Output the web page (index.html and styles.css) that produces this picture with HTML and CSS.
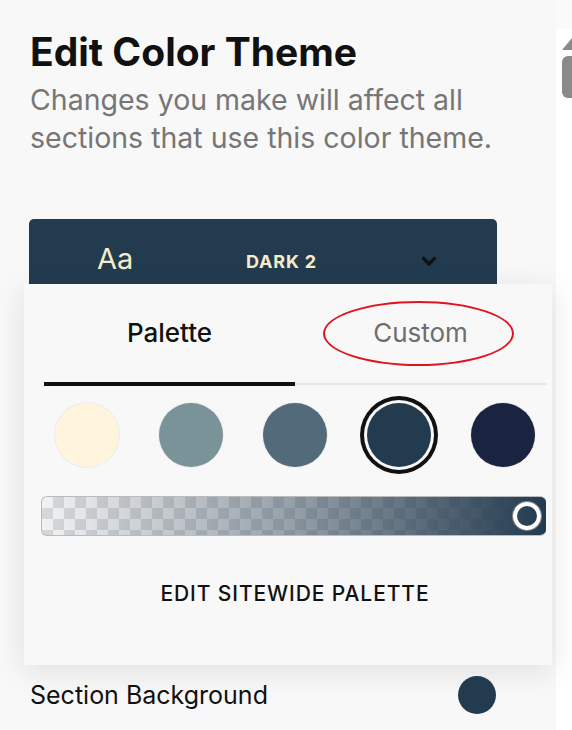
FILE: index.html
```html
<!DOCTYPE html>
<html lang="en">

<head>
    <meta charset="UTF-8">
    <meta name="viewport" content="width=device-width, initial-scale=1.0">
    <title>Edit Color Theme</title>
    <link rel="stylesheet" href="styles.css">
</head>

<body>
    <div class="panel">
        <h1 class="title">Edit Color Theme</h1>
        <p class="subtitle">Changes you make will affect all<br>sections that use this color theme.</p>

        <!-- Theme selector -->
        <div class="theme-bar">
            <span class="theme-sample">Aa</span>
            <span class="theme-name">DARK 2</span>
            <svg class="theme-chevron" width="18" height="11" viewBox="0 0 18 11">
                <path d="M2.5 2.5 L9 9 L15.5 2.5" fill="none" stroke="#111" stroke-width="3.2" />
            </svg>
        </div>

        <!-- Dropdown -->
        <div class="dropdown">
            <div class="tabs">
                <div class="tab active">Palette</div>
                <div class="tab">Custom</div>
            </div>
            <div class="swatches">
                <span class="swatch" style="background:#fff5dc"></span>
                <span class="swatch" style="background:#7a9399"></span>
                <span class="swatch" style="background:#526a7a"></span>
                <span class="swatch selected" style="background:#233b4f"></span>
                <span class="swatch" style="background:#1a2340"></span>
            </div>
            <div class="slider">
                <div class="slider-fill"></div>
                <span class="slider-knob"></span>
            </div>
            <div class="edit-link">EDIT SITEWIDE PALETTE</div>
        </div>

        <div class="row">
            <span>Section Background</span>
            <span class="row-dot"></span>
        </div>
    </div>

    <div class="side">
        <div class="side-box">
            <svg width="10" height="70" viewBox="0 0 10 70">
                <path d="M0 21 L10 9 L10 21 Z" fill="#8a8a8a" />
                <rect x="0" y="27" width="16" height="42" rx="6" fill="#8a8a8a" />
            </svg>
        </div>
    </div>
</body>

</html>
```

FILE: styles.css
```css
body {
    margin: 0;
    font-family: Inter, "Noto Sans", sans-serif;
    background: #fafafa;
    display: flex;
    height: 730px;
    overflow: hidden;
}

.panel {
    position: relative;
    width: 556px;
    flex: none;
    background: #f8f8f8;
    padding: 29px 0 0 30px;
    box-sizing: border-box;
}

.title {
    margin: 0;
    font-size: 39px;
    line-height: 46px;
    font-weight: 700;
    color: #111;
}

.subtitle {
    margin: 6px 0 0;
    font-size: 28.5px;
    line-height: 38px;
    color: #767676;
    white-space: nowrap;
}

/* Theme selector bar */
.theme-bar {
    margin-top: 62px;
    width: 468px;
    height: 80px;
    margin-left: -1px;
    background: #233b4f;
    border-radius: 5px;
    display: flex;
    align-items: flex-start;
    padding-top: 22px;
    box-sizing: border-box;
}

.theme-sample {
    margin-left: 68px;
    width: 149px;
    font-size: 29px;
    color: #f6ecc9;
}

.theme-name {
    margin-top: 10px;
    width: 72px;
    font-size: 18px;
    font-weight: 700;
    letter-spacing: 0.8px;
    color: #f6ecc9;
}

.theme-chevron {
    margin-left: 102px;
    margin-top: 14px;
}

/* Dropdown popover */
.dropdown {
    position: absolute;
    left: 24px;
    top: 284px;
    width: 528px;
    height: 381px;
    background: #f8f8f8;
    box-shadow: 0 6px 30px rgba(0, 0, 0, 0.1);
    padding: 0 6px 0 20px;
    box-sizing: border-box;
}

.tabs {
    display: flex;
    height: 99px;
    border-bottom: 2px solid #e6e6e6;
}

.tab {
    flex: 1;
    text-align: center;
    padding-top: 33px;
    font-size: 26px;
    color: #6e6e6e;
    position: relative;
}

.tab.active {
    color: #111;
    font-weight: 500;
    border-bottom: 4px solid #111;
    margin-bottom: -3px;
}

.tab:last-child::after {
    content: "";
    position: absolute;
    left: 28px;
    top: 17px;
    width: 187px;
    height: 61px;
    border: 2px solid #e0141e;
    border-radius: 50%;
}

.swatches {
    display: flex;
    justify-content: space-between;
    padding: 18px 11px 0 11px;
}

.swatch {
    width: 64px;
    height: 64px;
    border-radius: 50%;
    box-shadow: 0 0 0 1px rgba(0, 0, 0, 0.05);
}

.swatch.selected {
    box-shadow: 0 0 0 3px #f8f8f8, 0 0 0 7px #111;
}

.slider {
    position: relative;
    margin-top: 29px;
    margin-left: -3px;
    height: 38px;
    border-radius: 6px;
    overflow: hidden;
    border: 1px solid #bbb;
    border-right: none;
    background-color: #f2f2f2;
    background-image:
        linear-gradient(45deg, #d6d8da 25%, transparent 25%, transparent 75%, #d6d8da 75%),
        linear-gradient(45deg, #d6d8da 25%, transparent 25%, transparent 75%, #d6d8da 75%);
    background-size: 22px 22px;
    background-position: 0 0, 11px 11px;
}

.slider-fill {
    height: 100%;
    background: linear-gradient(to right, rgba(35, 59, 79, 0) 0%, rgba(35, 59, 79, 0.45) 50%, #233b4f 100%);
}

.slider-knob {
    position: absolute;
    right: 5px;
    top: 5px;
    width: 20px;
    height: 20px;
    border-radius: 50%;
    border: 4px solid #fff;
    box-shadow: 0 0 0 1px #888;
}

.edit-link {
    margin-top: 45px;
    text-align: center;
    font-size: 21px;
    font-weight: 500;
    letter-spacing: 0.9px;
    color: #111;
}

/* Row under the popover */
.row {
    position: absolute;
    left: 30px;
    top: 676px;
    width: 466px;
    display: flex;
    justify-content: space-between;
    align-items: center;
    font-size: 25px;
    color: #111;
}

.row-dot {
    width: 38px;
    height: 38px;
    border-radius: 50%;
    background: #233b4f;
}

.side {
    flex: 1;
    padding-top: 29px;
}

.side-box {
    background: #fff;
    height: 100%;
    padding-left: 6px;
    overflow: hidden;
}
```
